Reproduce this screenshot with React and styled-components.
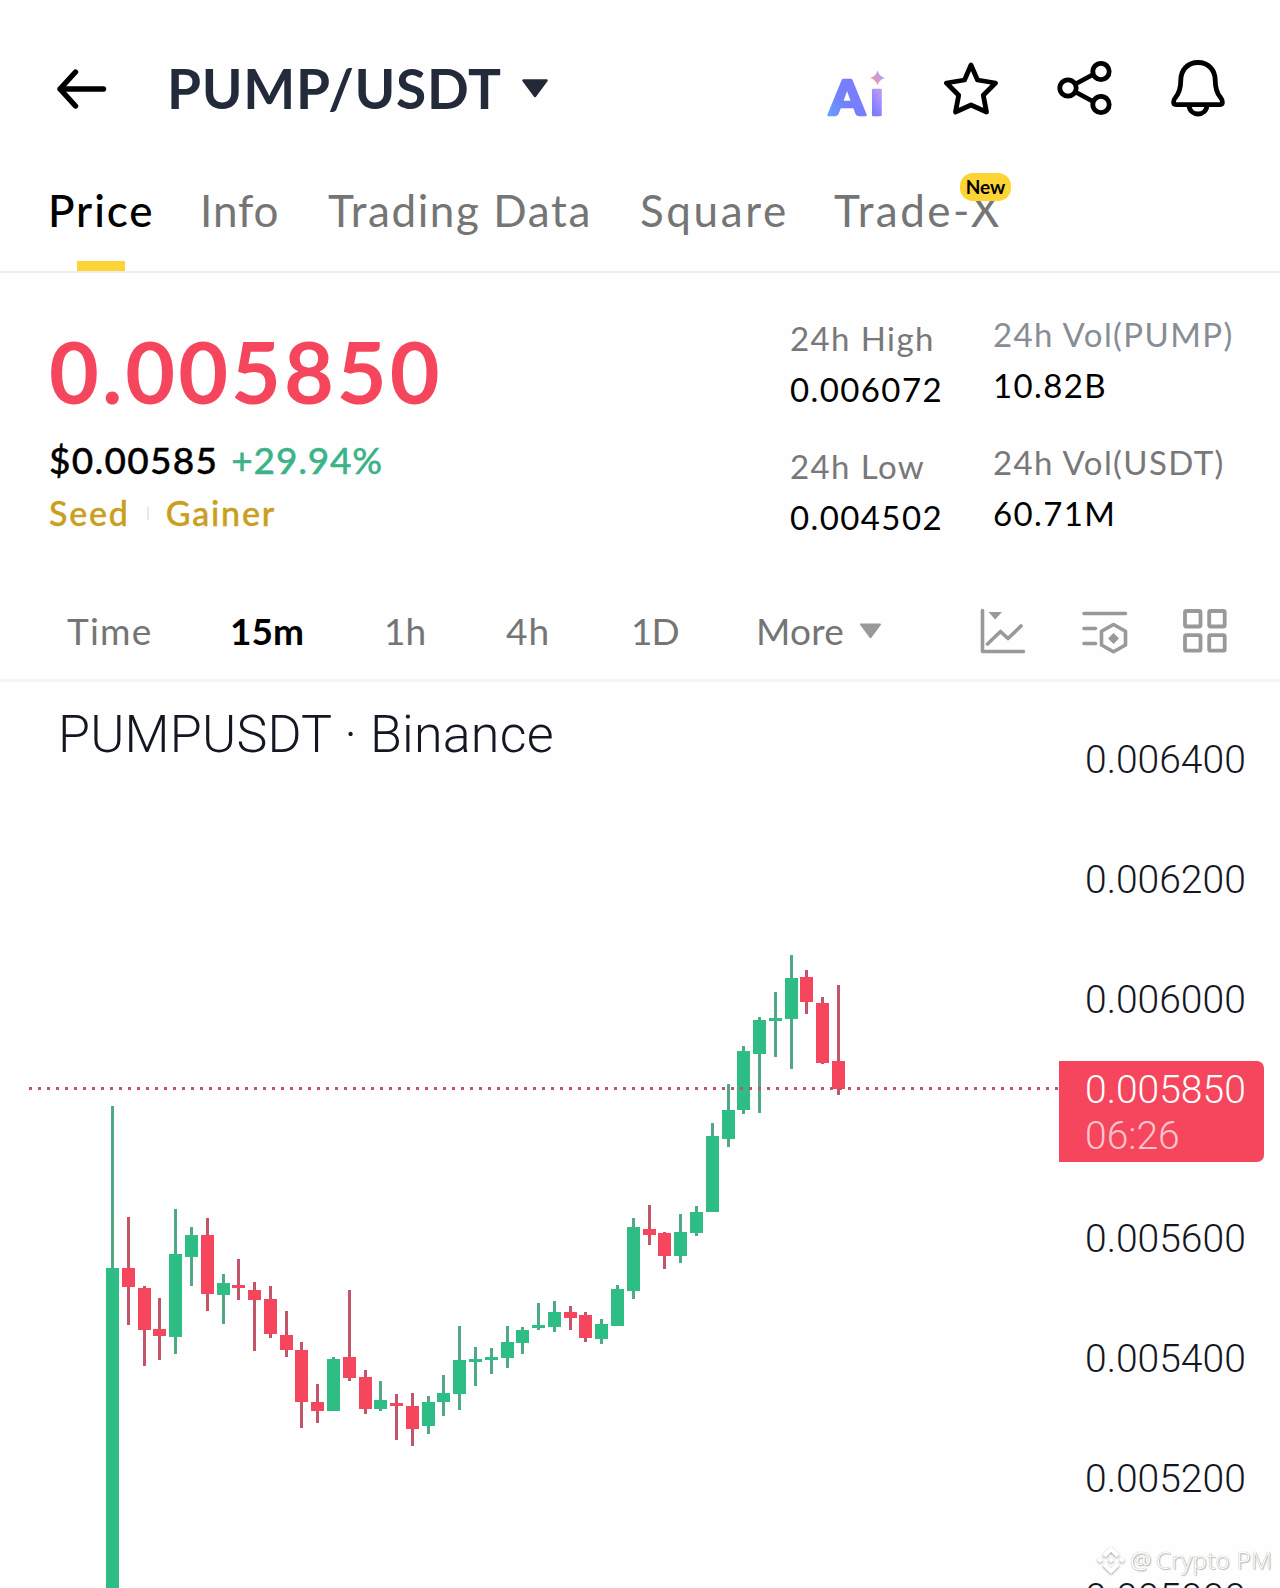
import React from "react";
import styled, { createGlobalStyle } from "styled-components";

const UP = "#2ebd85";
const DOWN = "#f6465d";

const tabs = [
  { name: "Price", width: 152, spacing: 1.9, active: true },
  { name: "Info", width: 128, spacing: 0.9 },
  { name: "Trading Data", width: 312, spacing: 1.6 },
  { name: "Square", width: 194, spacing: 2.6 },
  { name: "Trade-X", width: 180, spacing: 2.5, badge: "New" },
];

const stats = [
  [
    { label: "24h High", value: "0.006072" },
    { label: "24h Low", value: "0.004502" },
  ],
  [
    { label: "24h Vol(PUMP)", value: "10.82B", muted: true },
    { label: "24h Vol(USDT)", value: "60.71M" },
  ],
];

const intervals = [
  { name: "Time", width: 163, spacing: 1.2 },
  { name: "15m", width: 154, spacing: 0, active: true },
  { name: "1h", width: 122, spacing: 0 },
  { name: "4h", width: 125, spacing: 1 },
  { name: "1D", width: 125, spacing: -1 },
];

const axis = ["0.006400", "0.006200", "0.006000", "", "0.005600", "0.005400", "0.005200", "0.005000"];

// x, wick top, wick bottom, body top, body bottom, rising
const candles = [
  [106, 1106, 1588, 1268, 1588, 1],
  [122, 1217, 1325, 1268, 1287, 0],
  [138, 1286, 1366, 1288, 1330, 0],
  [153, 1298, 1360, 1329, 1336, 0],
  [169, 1209, 1354, 1254, 1337, 1],
  [185, 1227, 1286, 1235, 1257, 1],
  [201, 1218, 1311, 1235, 1294, 0],
  [217, 1274, 1324, 1283, 1295, 1],
  [232, 1259, 1300, 1285, 1288, 0],
  [248, 1282, 1351, 1290, 1300, 0],
  [264, 1286, 1338, 1299, 1334, 0],
  [280, 1311, 1357, 1335, 1350, 0],
  [295, 1342, 1428, 1350, 1402, 0],
  [311, 1384, 1423, 1402, 1411, 0],
  [327, 1357, 1411, 1359, 1411, 1],
  [343, 1290, 1381, 1357, 1378, 0],
  [359, 1370, 1414, 1377, 1409, 0],
  [374, 1381, 1411, 1400, 1409, 1],
  [390, 1394, 1440, 1403, 1406, 0],
  [406, 1393, 1446, 1406, 1429, 0],
  [422, 1396, 1434, 1402, 1426, 1],
  [437, 1375, 1416, 1393, 1402, 1],
  [453, 1326, 1410, 1360, 1394, 1],
  [469, 1347, 1386, 1359, 1362, 1],
  [485, 1348, 1374, 1357, 1360, 1],
  [501, 1326, 1368, 1342, 1358, 1],
  [516, 1327, 1354, 1330, 1343, 1],
  [532, 1303, 1330, 1325, 1328, 1],
  [548, 1301, 1332, 1312, 1327, 1],
  [564, 1306, 1330, 1312, 1318, 0],
  [579, 1312, 1342, 1315, 1338, 0],
  [595, 1319, 1344, 1324, 1339, 1],
  [611, 1285, 1326, 1289, 1326, 1],
  [627, 1218, 1299, 1227, 1291, 1],
  [643, 1205, 1245, 1229, 1235, 0],
  [658, 1232, 1269, 1233, 1256, 0],
  [674, 1214, 1263, 1232, 1256, 1],
  [690, 1206, 1236, 1212, 1233, 1],
  [706, 1123, 1212, 1136, 1212, 1],
  [722, 1084, 1147, 1110, 1139, 1],
  [737, 1046, 1114, 1051, 1110, 1],
  [753, 1017, 1113, 1020, 1054, 1],
  [769, 992, 1057, 1018, 1021, 1],
  [785, 955, 1069, 978, 1019, 1],
  [800, 970, 1014, 977, 1002, 0],
  [816, 997, 1064, 1003, 1063, 0],
  [832, 985, 1095, 1061, 1089, 0],
];

const BackIcon = () => (
  <svg width="52" height="42" viewBox="0 0 52 42" fill="none" stroke="#000" strokeWidth="5.4" strokeLinecap="round" strokeLinejoin="round">
    <path d="M20.500 5L5 22l15.500 17M5 22h43.500" />
  </svg>
);

const AiLogo = () => (
  <LogoSvg width="60" height="50" viewBox="0 0 60 50">
    <defs>
      <linearGradient id="ai" x1="0" y1="46" x2="56" y2="14" gradientUnits="userSpaceOnUse">
        <stop offset="0" stopColor="#62a4ff" />
        <stop offset="0.3" stopColor="#7480fb" />
        <stop offset="0.62" stopColor="#7a7dfc" />
        <stop offset="0.82" stopColor="#b595fb" />
        <stop offset="1" stopColor="#f09aa6" />
      </linearGradient>
      <linearGradient id="spark" x1="44" y1="14" x2="56" y2="4" gradientUnits="userSpaceOnUse">
        <stop offset="0" stopColor="#f58f8f" />
        <stop offset="0.5" stopColor="#d79ac4" />
        <stop offset="1" stopColor="#a7a0f5" />
      </linearGradient>
    </defs>
    <text y="44.500" transform="scale(1.080 1)" fontFamily="Lato, sans-serif" fontWeight="900" fontSize="47" fill="url(#ai)" stroke="url(#ai)" strokeWidth="2.600" strokeLinejoin="round">
      <tspan x="2">A</tspan>
      <tspan x="40">ı</tspan>
    </text>
    <path d="M50.500 0.500q1.500 6 7.500 7.500q-6 1.500-7.500 7.500q-1.500-6-7.500-7.500q6-1.500 7.500-7.500z" fill="url(#spark)" />
  </LogoSvg>
);

const StarIcon = () => (
  <svg width="56" height="56" viewBox="1.500 -1 56 56" fill="none" stroke="#000" strokeWidth="4.800" strokeLinejoin="round">
    <path d="M28.500 4L35 19L53 22L40.800 34.300L44 51L28.500 44L13 51L16.200 34.300L4 22L22 19Z" />
  </svg>
);

const ShareIcon = () => (
  <svg width="56" height="56" viewBox="0 0 56 56" fill="none" stroke="#000" strokeWidth="4.800">
    <circle cx="11" cy="28" r="8.200" />
    <circle cx="44" cy="11.500" r="8.200" />
    <circle cx="44" cy="44.500" r="8.200" />
    <path d="M18.500 24L37 14M18.500 32L37 42" />
  </svg>
);

const BellIcon = () => (
  <svg width="56" height="60" viewBox="0 0 56 60" fill="none" stroke="#000" strokeWidth="4.800" strokeLinejoin="round">
    <path d="M28 4.500C17.500 4.500 11 12 10.800 22C10.700 29.500 9.500 35 5.500 39.500C2.500 43 3 46.600 6.500 46.600H49.500C53 46.600 53.500 43 50.500 39.500C46.500 35 45.300 29.500 45.200 22C45 12 38.500 4.500 28 4.500Z" />
    <path d="M19 47.500C19.500 53 23.500 56 28 56S36.500 53 37 47.500" />
  </svg>
);

const Caret = ({ width, height, color }) => (
  <svg width={width} height={height} viewBox="0 0 28 19">
    <path d="M2.500 1.500h23L14 17z" fill={color} stroke={color} strokeWidth="2.500" strokeLinejoin="round" />
  </svg>
);

const ChartIcon = () => (
  <svg width="46" height="46" viewBox="0 0 46 46" fill="none" stroke="#999" strokeWidth="3.600" strokeLinecap="round" strokeLinejoin="round">
    <path d="M2.500 2.500V43.500H43.500M7.500 36L20.500 23.500L28 30.500L41 18" />
    <path d="M8.500 4h13.500L15.200 11.500z" fill="#999" stroke="none" />
  </svg>
);

const SettingsIcon = () => (
  <svg width="46" height="46" viewBox="0 0 46 46" fill="none" stroke="#999" strokeWidth="3.600" strokeLinecap="round" strokeLinejoin="round">
    <path d="M2 5.500H43.500M2 20.500H13.500M2 35.500H13.500" />
    <path d="M31.500 16.500L43.500 23.300V37L31.500 43.800L19.500 37V23.300Z" />
    <path d="M31.500 25L37 30.500L31.500 36L26 30.500Z" fill="#999" stroke="none" />
  </svg>
);

const GridIcon = () => (
  <svg width="44" height="44" viewBox="0 0 44 44" fill="none" stroke="#999" strokeWidth="3.800">
    <rect x="2" y="2" width="15.500" height="15.500" rx="1.500" />
    <rect x="26.200" y="2" width="15.500" height="15.500" rx="1.500" />
    <rect x="2" y="26.200" width="15.500" height="15.500" rx="1.500" />
    <rect x="26.200" y="26.200" width="15.500" height="15.500" rx="1.500" />
  </svg>
);

const BinanceMark = () => (
  <svg width="30" height="30" viewBox="0 0 30 30" fill="#fff">
    <path d="M15 1l8.500 8.500l-3 3L15 7l-5.500 5.500l-3-3zM15 12l3 3l-3 3l-3-3zM4 12l3 3l-3 3l-3-3zM26 12l3 3l-3 3l-3-3zM15 29l-8.500-8.500l3-3L15 23l5.500-5.500l3 3z" />
  </svg>
);

const Candles = () => (
  <svg width="1059" height="906" viewBox="0 682 1059 906" shapeRendering="crispEdges">
    {candles.map(([x, high, low, top, bottom, rising]) => (
      <g key={x}>
        <rect x={x + 5} y={high} width="3" height={low - high} fill={rising ? "#4fa985" : "#c05667"} />
        <rect x={x} y={top} width="13" height={bottom - top} fill={rising ? UP : DOWN} />
      </g>
    ))}
    <line x1="29" x2="1059" y1="1088.500" y2="1088.500" stroke="#b95766" strokeWidth="3" strokeDasharray="3 6" />
  </svg>
);

const App = () => {
  return (
    <Page>
      <GlobalStyle />
      <Header>
        <BackIcon />
        <Pair>
          PUMP/USDT
          <Caret width={28} height={19} color="#232a36" />
        </Pair>
        <Actions>
          <AiLogo />
          <StarIcon />
          <ShareIcon />
          <BellIcon />
        </Actions>
      </Header>

      <Tabs>
        {tabs.map((tab) => (
          <Tab key={tab.name} $width={tab.width} $active={tab.active}>
            <TabName $active={tab.active} $spacing={tab.spacing}>
              {tab.name}
              {tab.badge && <Badge>{tab.badge}</Badge>}
            </TabName>
          </Tab>
        ))}
      </Tabs>

      <Summary>
        <PriceBlock>
          <LastPrice>0.005850</LastPrice>
          <Fiat>
            <span>$0.00585</span>
            <Change>+29.94%</Change>
          </Fiat>
          <Labels>
            <span>Seed</span>
            <Separator />
            <span>Gainer</span>
          </Labels>
        </PriceBlock>
        {stats.map((column, index) => (
          <StatColumn key={index} $second={index === 1}>
            {column.map((stat) => (
              <Stat key={stat.label}>
                <StatLabel $muted={stat.muted}>{stat.label}</StatLabel>
                <StatValue>{stat.value}</StatValue>
              </Stat>
            ))}
          </StatColumn>
        ))}
      </Summary>

      <Intervals>
        {intervals.map((item) => (
          <Interval key={item.name} $width={item.width} $active={item.active} $spacing={item.spacing}>
            {item.name}
          </Interval>
        ))}
        <Interval $width={224} $spacing={0.3}>
          More
          <Caret width={23} height={16} color="#999" />
        </Interval>
        <Tools>
          <ChartIcon />
          <SettingsIcon />
          <GridIcon />
        </Tools>
      </Intervals>

      <Chart>
        <Candles />
        <ChartTitle>PUMPUSDT · Binance</ChartTitle>
        <Axis>
          {axis.map((price, index) => (
            <AxisLabel key={index}>{price}</AxisLabel>
          ))}
        </Axis>
        <PriceTag>
          <span>0.005850</span>
          <Countdown>06:26</Countdown>
        </PriceTag>
        <Watermark>
          <BinanceMark />
          <At>@</At>
          <span>Crypto PM</span>
        </Watermark>
      </Chart>
    </Page>
  );
};

export default App;

const GlobalStyle = createGlobalStyle`
  * {
    box-sizing: border-box;
  }

  body {
    margin: 0;
    background: #fefefe;
  }

  svg {
    display: block;
    flex-shrink: 0;
  }
`;

const Page = styled.div`
  width: 1280px;
  height: 1588px;
  overflow: hidden;
  background: #fefefe;
  color: #000;
  font-family: Lato, "Liberation Sans", sans-serif;
  white-space: nowrap;
`;

const Header = styled.header`
  display: flex;
  align-items: center;
  height: 160px;
  padding: 16px 54px 0 55px;
`;

const LogoSvg = styled.svg`
  margin-top: 14px;
  overflow: visible;
`;

const Pair = styled.h1`
  display: flex;
  align-items: center;
  gap: 19px;
  margin: 0 0 0 60px;
  color: #232b3b;
  font-size: 55px;
  font-weight: 700;
  letter-spacing: 0.7px;
  line-height: 60px;
`;

const Actions = styled.div`
  display: flex;
  align-items: center;
  gap: 57px;
  margin-left: auto;
`;

const Tabs = styled.nav`
  display: flex;
  height: 113px;
  padding-left: 48px;
  border-bottom: 2px solid #eeeeee;
`;

const Tab = styled.div`
  display: flex;
  flex-direction: column;
  align-items: flex-start;
  width: ${({ $width }) => $width}px;
  padding-top: 25px;
  color: ${({ $active }) => ($active ? "#000" : "#757575")};
  font-size: 44px;
  line-height: 51px;
`;

const TabName = styled.span`
  position: relative;
  display: flex;
  flex-direction: column;
  align-items: center;
  height: 86px;
  font-weight: ${({ $active }) => ($active ? 500 : 400)};
  letter-spacing: ${({ $spacing }) => $spacing}px;

  &::after {
    content: "";
    width: 48px;
    height: 10px;
    margin-top: auto;
    background: ${({ $active }) => ($active ? "#fcd535" : "transparent")};
  }
`;

const Badge = styled.span`
  position: absolute;
  top: -12px;
  left: 126px;
  width: 51px;
  height: 28px;
  border-radius: 13px;
  background: #fcd535;
  color: #000;
  font-size: 19px;
  font-weight: 700;
  letter-spacing: 0;
  line-height: 28px;
  text-align: center;
`;

const Summary = styled.section`
  display: flex;
  height: 310px;
  padding-left: 49px;
`;

const PriceBlock = styled.div`
  width: 741px;
  padding-top: 50px;
`;

const LastPrice = styled.div`
  color: #f6465d;
  font-size: 86px;
  font-weight: 700;
  letter-spacing: 3px;
  line-height: 96px;
`;

const Fiat = styled.div`
  display: flex;
  gap: 13px;
  margin-top: 16px;
  font-size: 37px;
  font-weight: 500;
  letter-spacing: 1.3px;
  line-height: 50px;
  -webkit-text-stroke: 0.4px currentColor;
`;

const Change = styled.span`
  color: #3bb287;
  letter-spacing: 0.8px;
`;

const Labels = styled.div`
  display: flex;
  align-items: center;
  margin-top: 8px;
  color: #c99f1e;
  font-size: 34px;
  font-weight: 500;
  letter-spacing: 1.8px;
  line-height: 40px;
  -webkit-text-stroke: 0.4px currentColor;
`;

const Separator = styled.i`
  width: 2px;
  height: 13px;
  margin: 0 17px;
  background: #e6e8ea;
`;

const StatColumn = styled.div`
  width: ${({ $second }) => ($second ? 250 : 203)}px;
  padding-top: ${({ $second }) => ($second ? 36 : 40)}px;
`;

const Stat = styled.div`
  height: 128px;
  font-size: 33px;
  letter-spacing: 1.4px;
  line-height: 51px;
`;

const StatLabel = styled.div`
  color: ${({ $muted }) => ($muted ? "#878d94" : "#787878")};
`;

const StatValue = styled.div`
  color: #000;
`;

const Intervals = styled.div`
  display: flex;
  align-items: center;
  height: 99px;
  padding: 0 53px 1px 67px;
  border-bottom: 3px solid #f5f5f5;
`;

const Interval = styled.div`
  display: flex;
  align-items: center;
  gap: 15px;
  width: ${({ $width }) => $width}px;
  color: ${({ $active }) => ($active ? "#000" : "#757575")};
  font-size: 37px;
  font-weight: ${({ $active }) => ($active ? 700 : 400)};
  letter-spacing: ${({ $spacing }) => $spacing}px;
  line-height: 50px;
`;

const Tools = styled.div`
  display: flex;
  align-items: center;
  gap: 55.5px;
`;

const Chart = styled.section`
  position: relative;
  display: flex;
  height: 906px;
  overflow: hidden;
  font-family: Roboto, "Liberation Sans", sans-serif;
  font-weight: 340;
`;

const ChartTitle = styled.div`
  position: absolute;
  top: 23px;
  left: 58px;
  color: #131722;
  font-size: 52px;
  letter-spacing: 0.2px;
  line-height: 60px;
`;

const Axis = styled.div`
  width: 221px;
  padding: 19px 0 0 26px;
`;

const AxisLabel = styled.div`
  height: 119.75px;
  color: #131722;
  font-size: 39px;
  line-height: 119.75px;
`;

const PriceTag = styled.div`
  position: absolute;
  top: 379px;
  left: 1059px;
  display: flex;
  flex-direction: column;
  width: 205px;
  height: 101px;
  padding: 6px 0 0 26px;
  border-radius: 0 7px 7px 0;
  background: #f6465d;
  color: #fff;
  font-size: 39px;
  line-height: 46px;
`;

const Countdown = styled.span`
  color: rgba(255, 255, 255, 0.7);
`;

const Watermark = styled.div`
  position: absolute;
  top: 862px;
  left: 1096px;
  display: flex;
  align-items: center;
  gap: 4px;
  color: #fff;
  font-family: "Noto Sans", sans-serif;
  font-size: 24px;
  font-weight: 300;
  letter-spacing: 0.3px;
  line-height: 32px;
  text-shadow: 0 0 1px rgba(0, 0, 0, 0.4), 1px 1px 1px rgba(0, 0, 0, 0.25);

  svg {
    filter: drop-shadow(0 1px 1px rgba(0, 0, 0, 0.4));
  }
`;

const At = styled.span`
  font-size: 24px;
  font-weight: 400;
`;
